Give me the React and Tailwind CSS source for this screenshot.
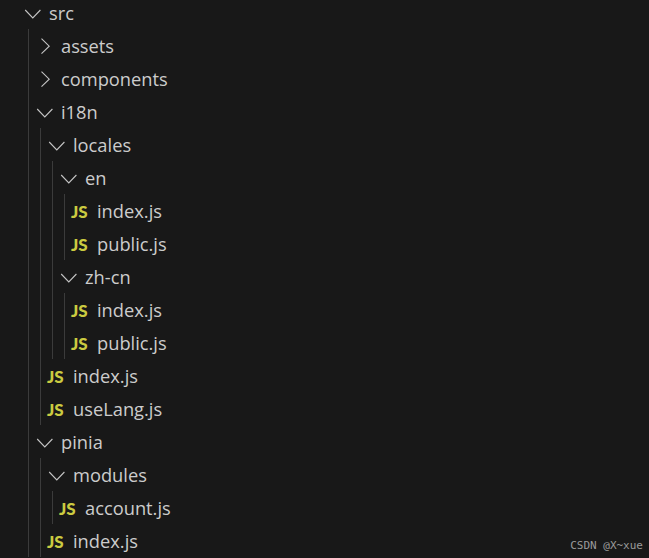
import React from 'react';

const tree = [
  {
    name: 'src',
    children: [
      { name: 'assets', closed: true },
      { name: 'components', closed: true },
      {
        name: 'i18n',
        children: [
          {
            name: 'locales',
            children: [
              { name: 'en', children: [{ name: 'index.js' }, { name: 'public.js' }] },
              { name: 'zh-cn', children: [{ name: 'index.js' }, { name: 'public.js' }] },
            ],
          },
          { name: 'index.js' },
          { name: 'useLang.js' },
        ],
      },
      {
        name: 'pinia',
        children: [
          { name: 'modules', children: [{ name: 'account.js' }] },
          { name: 'index.js' },
        ],
      },
    ],
  },
];

function Chevron({ closed }) {
  return (
    <svg width="16" height="16" viewBox="0 0 16 16" fill="none" stroke="#c5c5c5" strokeWidth="1.1" className="shrink-0 ml-[2px] mr-[8px] overflow-visible">
      {closed ? <path d="M4.5 0.7 L12.2 8.2 L4.5 15.7" /> : <path d="M0.2 5 L7.8 13 L15.4 5" />}
    </svg>
  );
}

function Node({ node }) {
  const isFile = !node.children && !node.closed;
  return (
    <div>
      <div className="flex items-center h-[33px] text-[18.3px] text-[#cccccc] whitespace-nowrap">
        {isFile ? (
          <span className="w-[26px] shrink-0 pt-[2px] text-[17px] font-black text-[#cbcb41] font-['Lato',sans-serif]">JS</span>
        ) : (
          <Chevron closed={node.closed} />
        )}
        <span>{node.name}</span>
      </div>
      {node.children && (
        <div className="ml-[5px] pl-[6px] border-l border-[#3b3b3b]">
          {node.children.map((child) => (
            <Node key={child.name} node={child} />
          ))}
        </div>
      )}
    </div>
  );
}

export default function App() {
  return (
    <div className="relative w-[649px] h-[558px] overflow-hidden bg-[#181818] font-['Open_Sans','Noto_Sans',sans-serif]">
      <div className="pl-[23px] -mt-[4px]">
        {tree.map((node) => (
          <Node key={node.name} node={node} />
        ))}
      </div>
      <span className="absolute right-[6px] bottom-[4px] text-[11px] text-[#9a9a9a] font-['DejaVu_Sans_Mono',monospace]">CSDN @X~xue</span>
    </div>
  );
}
